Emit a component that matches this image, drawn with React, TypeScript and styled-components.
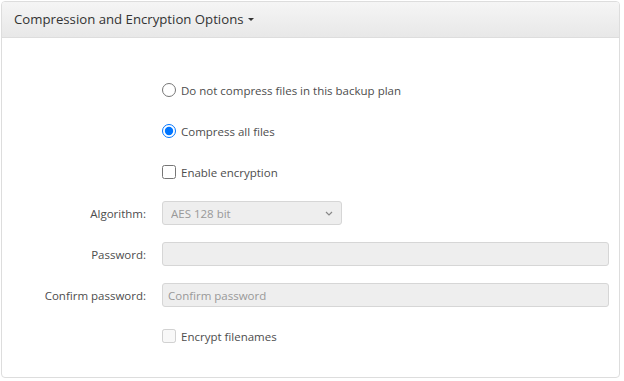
import React from "react";
import styled, { createGlobalStyle } from "styled-components";

const GlobalStyle = createGlobalStyle`
  html, body {
    margin: 0;
    padding: 0;
    background: #ffffff;
  }
  body {
    font-family: "Open Sans", "Noto Sans", sans-serif;
    font-size: 11.5px;
    color: #555555;
  }
`;

const Page = styled.div`
  padding: 1px 0 0 1px;
`;

const Panel = styled.section`
  width: 619px;
  height: 377px;
  box-sizing: border-box;
  border: 1px solid #dddddd;
  border-radius: 4px;
  background: #ffffff;
  overflow: hidden;
`;

const PanelHeading = styled.header`
  height: 33px;
  box-sizing: content-box;
  display: flex;
  align-items: center;
  padding: 0 12px 2px;
  border-bottom: 1px solid #dddddd;
  background: linear-gradient(to bottom, #f5f5f5 0%, #e8e8e8 100%);
  color: #333333;
  font-size: 13.2px;
`;

const Caret = styled.span`
  display: inline-block;
  width: 0;
  height: 0;
  margin-left: 4px;
  margin-top: 2px;
  border-top: 3.5px solid #333333;
  border-left: 3.5px solid transparent;
  border-right: 3.5px solid transparent;
`;

const Form = styled.form`
  display: grid;
  grid-template-columns: 144px 1fr;
  column-gap: 16px;
  row-gap: 17px;
  padding: 40px 10px 29px 0;
`;

const Label = styled.label`
  display: flex;
  align-items: center;
  justify-content: flex-end;
  height: 24px;
  color: #4d4d4d;
`;

const Spacer = styled.span``;

const Choice = styled.label<{ $disabled?: boolean }>`
  display: flex;
  align-items: center;
  height: 24px;
  gap: 5px;
  color: #4d4d4d;
  cursor: ${(p) => (p.$disabled ? "default" : "pointer")};
`;

const Radio = styled.input.attrs({ type: "radio" })`
  width: 14px;
  height: 14px;
  margin: 0;
  accent-color: #0075ff;
`;

const Check = styled.input.attrs({ type: "checkbox" })`
  width: 14px;
  height: 14px;
  margin: 0;
`;

const Select = styled.select`
  appearance: none;
  width: 180px;
  height: 24px;
  box-sizing: border-box;
  padding: 0 24px 0 8px;
  border: 1px solid #d6d6d6;
  border-radius: 3px;
  background-color: #eeeeee;
  background-image: url("data:image/svg+xml;utf8,<svg xmlns='http://www.w3.org/2000/svg' width='8' height='5' viewBox='0 0 8 5'><path d='M1 1l3 3 3-3' fill='none' stroke='%23888' stroke-width='1.2'/></svg>");
  background-repeat: no-repeat;
  background-position: right 8px center;
  font-family: inherit;
  font-size: 11.5px;
  color: #999999;
  opacity: 1;
`;

const TextInput = styled.input`
  width: 100%;
  height: 24px;
  box-sizing: border-box;
  padding: 0 5px;
  border: 1px solid #d6d6d6;
  border-radius: 3px;
  background: #eeeeee;
  font-family: inherit;
  font-size: 11.5px;
  color: #555555;
  &::placeholder {
    color: #999999;
  }
`;

export default function App() {
  return (
    <>
      <GlobalStyle />
      <Page>
        <Panel>
          <PanelHeading>
            Compression and Encryption Options
            <Caret />
          </PanelHeading>
          <Form>
            <Spacer />
            <Choice>
              <Radio name="compress" />
              Do not compress files in this backup plan
            </Choice>

            <Spacer />
            <Choice>
              <Radio name="compress" defaultChecked />
              Compress all files
            </Choice>

            <Spacer />
            <Choice>
              <Check />
              Enable encryption
            </Choice>

            <Label>Algorithm:</Label>
            <div>
              <Select disabled defaultValue="aes128">
                <option value="aes128">AES 128 bit</option>
                <option value="aes256">AES 256 bit</option>
              </Select>
            </div>

            <Label>Password:</Label>
            <TextInput type="password" disabled />

            <Label>Confirm password:</Label>
            <TextInput type="password" disabled placeholder="Confirm password" />

            <Spacer />
            <Choice $disabled>
              <Check disabled />
              Encrypt filenames
            </Choice>
          </Form>
        </Panel>
      </Page>
    </>
  );
}
